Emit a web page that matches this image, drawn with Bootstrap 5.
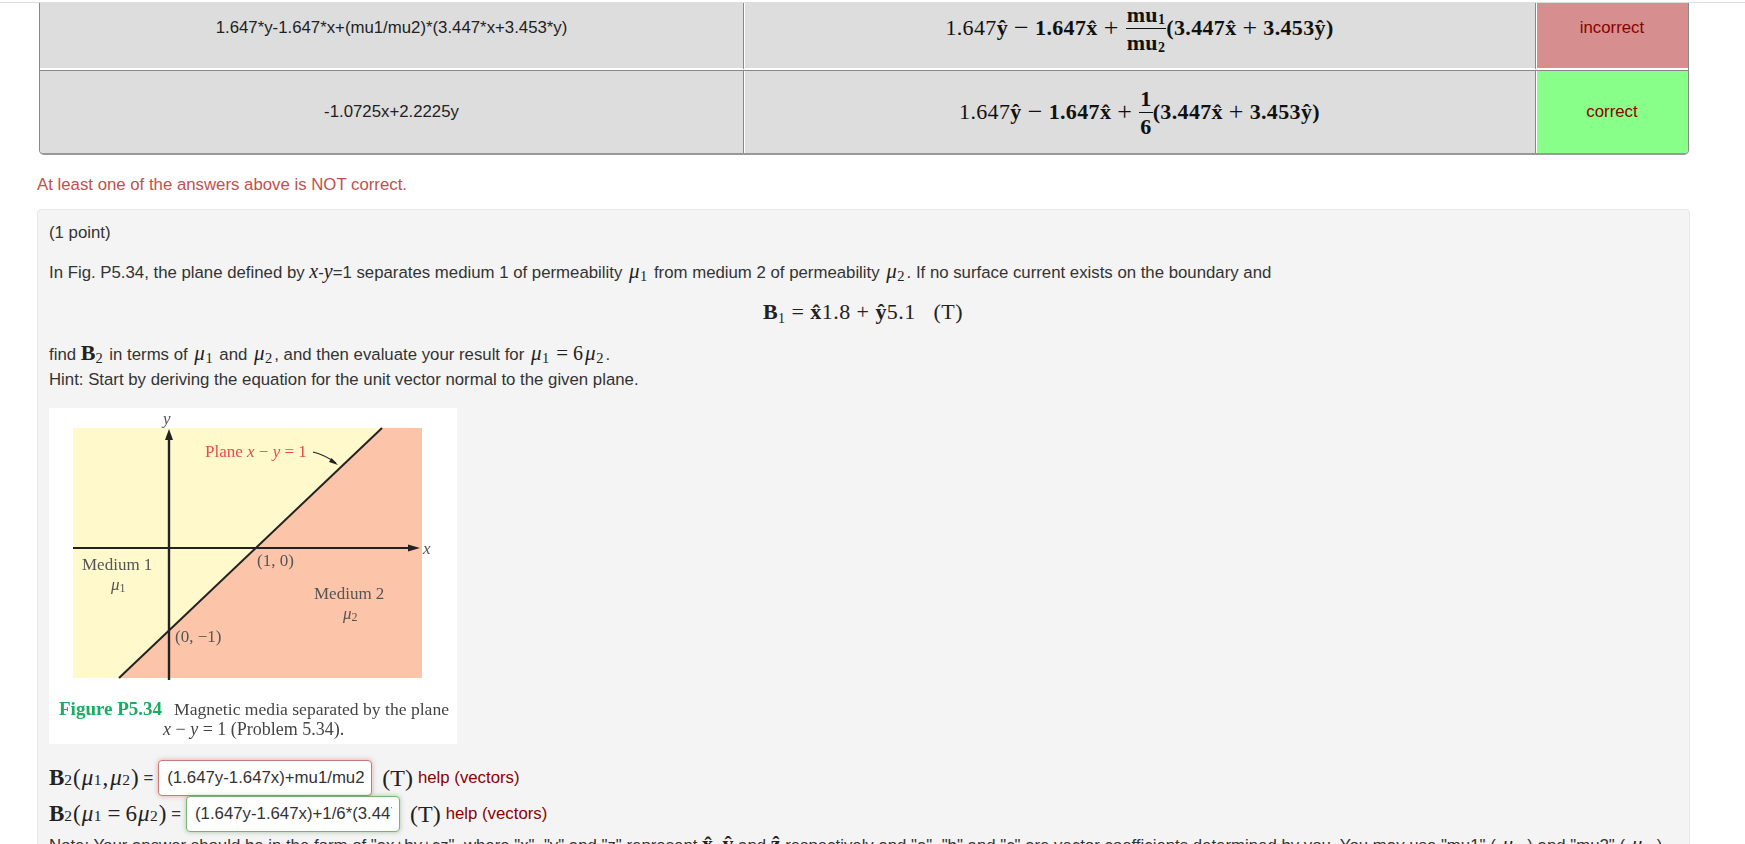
<!DOCTYPE html>
<html lang="en"><head><meta charset="utf-8"><title>Problem</title>
<link href="https://cdn.jsdelivr.net/npm/bootstrap@5.3.0/dist/css/bootstrap.min.css" rel="stylesheet">
<style>
html,body{height:844px;overflow:hidden}
body{font-family:"Liberation Sans",Arial,sans-serif;font-size:16.8px;line-height:24px;color:#333;background:#fff}
.topline{position:fixed;top:0;left:0;right:0;height:3px;background:#fff;border-bottom:1px solid #ddd;z-index:5}
.pagewrap{padding:0 55px 0 39px}
.anstable{width:1650px;table-layout:fixed;border-collapse:separate;border-spacing:0;border:1px solid #888;border-width:0 1px 2px 1px;border-bottom-color:#999;border-radius:0 0 5px 5px;overflow:hidden;margin:-12px 0 0;box-shadow:inset 0 0 0 1px #fff}
.anstable td{background:#ddd;text-align:center;vertical-align:middle;padding:0;border-left:1px solid #888;box-shadow:inset 1px 0 0 #fff;color:#222}
.anstable td:first-child{border-left:0;box-shadow:none}
.anstable tr.r1 td{height:82px;border-bottom:2px solid #fff}
.anstable tr.r2 td{height:83px;border-top:1px solid #888}
.anstable td.bad{background:#d68e8e;color:#8b0000}
.anstable td.good{background:#8f8;color:#8b0000}
.mth{font-family:"Liberation Serif",serif;font-size:22px;letter-spacing:.35px;color:#111;display:inline-flex;align-items:center;gap:6px;white-space:nowrap}
.mth b{font-weight:700}
.op{font-size:26px;line-height:1;font-weight:400;vertical-align:-1px}
.frac{display:inline-flex;flex-direction:column;align-items:center;line-height:27px;font-weight:700;margin:0 -6px 0 1px}
.frac>span:first-child{border-bottom:1.5px solid #111;padding:0 1px}
.frac sub{font-size:14px;bottom:-.2em}
.statusmsg{color:#c0504e;margin:18px 0 0 -2px;line-height:24px;height:24px}
.probbox{margin:12px 0 0 -2px;width:1653px;height:700px;background:#f4f4f4;border:1px solid #e8e8e8;border-radius:4px;padding:11px 11px}
.probbox p{margin:0}
.m{font-family:"Liberation Serif",serif;font-size:20px;color:#222}
.mu{font-family:"Liberation Serif",serif;font-style:italic;font-size:21px;margin:0 .5px 0 2px;color:#222}
.mb{font-family:"Liberation Serif",serif;font-weight:700;font-size:22px;color:#222}
.sb{font-family:"Liberation Serif",serif;font-size:14.5px;vertical-align:-3px;line-height:1;margin-right:2px;color:#222}
.eqs{font-family:"Liberation Serif",serif;font-size:21px;margin:0 5px;color:#222}
.pointline{height:24px}
.qline{margin-top:14px!important;white-space:nowrap}
.dispeq{text-align:center;font-size:22px;letter-spacing:.45px;margin:15px 0 17px;height:24px;font-family:"Liberation Serif",serif;color:#222;white-space:nowrap;padding-right:1px}
.dispeq sub{font-size:14px;bottom:-.25em}
.hintline{margin-top:1px!important}
.figbox{display:block;width:408px;height:336px;margin-top:16px;background:#fff}
.ansrow{height:36px;display:flex;align-items:center;white-space:nowrap}
.ansfirst{margin-top:16px}
.ansbox{width:214px;height:36px;background:#fff;border-radius:4px;padding:0 7px 0 8px;margin:0 10px 0 5px;display:flex;align-items:center;font-size:16.8px;color:#333;white-space:nowrap;line-height:20px}
.ansclip{display:block;width:100%;overflow:hidden}
.ansbad{border:1px solid #cc7a78;box-shadow:0 0 5px rgba(185,74,72,.45)}
.ansgood{border:1px solid #78b478;box-shadow:0 0 5px rgba(70,136,71,.45)}
.helplink{color:#8b0000;margin-left:5px}
.ansm{font-family:"Liberation Serif",serif;font-size:23px;color:#222;display:inline-flex;align-items:baseline}
.ansm .mu{font-size:23px;margin:0 .5px 0 1px}
.ansm .mb{font-size:23px}
.ansm .sb{font-size:15.5px;margin-right:1px}
.ansm .eqs{font-size:23px}
.commagap{margin-right:1px}
.anst{font-family:"Liberation Serif",serif;font-size:24px;color:#222}
.notep{margin-top:0!important;white-space:nowrap}
</style></head><body>
<div class="topline"></div>
<div class="pagewrap">
<table class="anstable"><colgroup><col style="width:703px"><col style="width:792px"><col style="width:153px"></colgroup>
<tr class="r1"><td>1.647*y-1.647*x+(mu1/mu2)*(3.447*x+3.453*y)</td>
<td><span class="mth"><span>1.647<b>ŷ</b></span><span class="op">−</span><b>1.647x̂</b><span class="op">+</span><span class="frac"><span>mu<sub>1</sub></span><span>mu<sub>2</sub></span></span><b>(3.447x̂ <span class="op">+</span> 3.453ŷ)</b></span></td>
<td class="bad">incorrect</td></tr>
<tr class="r2"><td>-1.0725x+2.2225y</td>
<td><span class="mth"><span>1.647<b>ŷ</b></span><span class="op">−</span><b>1.647x̂</b><span class="op">+</span><span class="frac"><span>1</span><span>6</span></span><b>(3.447x̂ <span class="op">+</span> 3.453ŷ)</b></span></td>
<td class="good">correct</td></tr></table>
<div class="statusmsg">At least one of the answers above is NOT correct.</div>
<div class="probbox">
<p class="pointline">(1 point)</p>
<p class="qline">In Fig. P5.34, the plane defined by <i class="m">x</i>-<i class="m">y</i>=1 separates medium 1 of permeability <span class="mu">μ</span><span class="sb">1</span> from medium 2 of permeability <span class="mu">μ</span><span class="sb">2</span>. If no surface current exists on the boundary and</p>
<div class="dispeq"><b>B</b><sub>1</sub> = <b>x̂</b>1.8 + <b>ŷ</b>5.1 &nbsp; (T)</div>
<p>find <span class="mb">B</span><span class="sb">2</span> in terms of <span class="mu">μ</span><span class="sb">1</span> and <span class="mu">μ</span><span class="sb">2</span>, and then evaluate your result for <span class="mu">μ</span><span class="sb">1</span><span class="eqs">=</span><span class="m">6</span><span class="mu">μ</span><span class="sb">2</span>.</p>
<p class="hintline">Hint: Start by deriving the equation for the unit vector normal to the given plane.</p>
<svg class="figbox" viewBox="0 0 408 336" role="img" aria-label="Figure P5.34">
<defs><filter id="sf"><feGaussianBlur stdDeviation="0.4"/></filter></defs>
<g filter="url(#sf)">
<rect x="24" y="20" width="349" height="250" fill="#fff9cc"/>
<polygon points="333,20 373,20 373,270 70,270" fill="#fcc5aa"/>
<line x1="70" y1="270" x2="333" y2="20" stroke="#222" stroke-width="2"/>
<line x1="120" y1="30" x2="120" y2="272" stroke="#222" stroke-width="2.4"/>
<polygon points="120,21 116,32 124,32" fill="#222"/>
<line x1="24" y1="140" x2="362" y2="140" stroke="#222" stroke-width="1.8"/>
<polygon points="371,140 359,136.5 359,143.5" fill="#222"/>
<path d="M264 44 Q 276 47 287 55" fill="none" stroke="#222" stroke-width="1.2"/>
<polygon points="289,57 280,54 282.5,50" fill="#222"/>
<g font-family="Liberation Serif,serif" font-size="17" fill="#555">
<text x="114" y="16" font-style="italic">y</text>
<text x="374" y="146" font-style="italic">x</text>
<text x="156" y="49" fill="#ee4a4a">Plane <tspan font-style="italic">x</tspan> − <tspan font-style="italic">y</tspan> = 1</text>
<text x="33" y="162">Medium 1</text>
<text x="62" y="182" font-style="italic">μ<tspan font-style="normal" font-size="12" dy="2">1</tspan></text>
<text x="208" y="158">(1, 0)</text>
<text x="265" y="191">Medium 2</text>
<text x="294" y="211" font-style="italic">μ<tspan font-style="normal" font-size="12" dy="2">2</tspan></text>
<text x="126" y="234">(0, −1)</text>
<text x="10" y="307" font-weight="700" font-size="19" fill="#1aab5f">Figure P5.34</text>
<text x="125" y="307" font-size="17.6" fill="#444">Magnetic media separated by the plane</text>
<text x="114" y="327" font-size="18" fill="#444"><tspan font-style="italic">x</tspan> − <tspan font-style="italic">y</tspan> = 1 (Problem 5.34).</text>
</g></g></svg>
<div class="ansrow ansfirst"><span class="ansm"><span class="mb">B</span><span class="sb">2</span>(<span class="mu">μ</span><span class="sb">1</span><span class="commagap">,</span><span class="mu">μ</span><span class="sb">2</span>)</span>&nbsp;=<div class="ansbox ansbad"><span class="ansclip">(1.647y-1.647x)+mu1/mu2</span></div><span class="anst">(T)</span><span class="helplink">help (vectors)</span></div>
<div class="ansrow"><span class="ansm"><span class="mb">B</span><span class="sb">2</span>(<span class="mu">μ</span><span class="sb">1</span><span class="eqs">=</span>6<span class="mu">μ</span><span class="sb">2</span>)</span>&nbsp;=<div class="ansbox ansgood"><span class="ansclip">(1.647y-1.647x)+1/6*(3.447x+3.453y)</span></div><span class="anst">(T)</span><span class="helplink">help (vectors)</span></div>
<p class="notep">Note: Your answer should be in the form of "ax+by+cz", where "x", "y" and "z" represent <span class="mb">x̂</span>, <span class="mb">ŷ</span> and <span class="mb">ẑ</span> respectively and "a", "b" and "c" are vector coefficients determined by you. You may use "mu1" ( <span class="mu">μ</span><span class="sb">1</span> ) and "mu2" ( <span class="mu">μ</span><span class="sb">2</span> ).</p>
</div></div>
<script src="https://cdn.jsdelivr.net/npm/bootstrap@5.3.0/dist/js/bootstrap.bundle.min.js"></script>
</body></html>
